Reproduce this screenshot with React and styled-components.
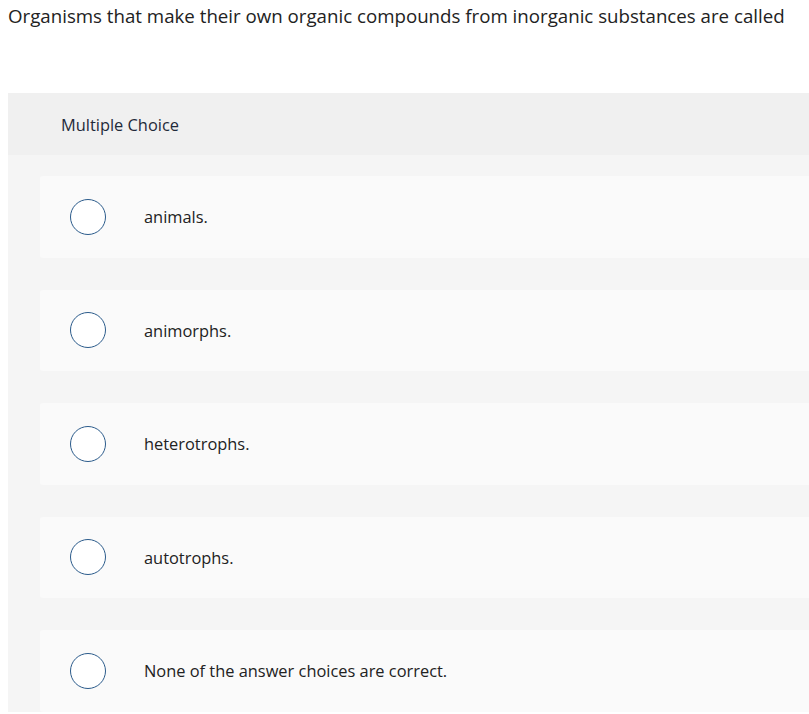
import React from 'react'
import styled, { createGlobalStyle } from 'styled-components'

const GlobalStyle = createGlobalStyle`
body {
  margin: 0;
  background: #ffffff;
  font-family: "Open Sans", Lato, sans-serif;
  overflow: hidden;
}
`

const Page = styled.div`
padding: 0 0 0 8px;
`

const Question = styled.p`
margin: 0;
padding-top: 4px;
font-size: 18.7px;
line-height: 24px;
color: #222222;
`

const Panel = styled.div`
margin-top: 65px;
margin-right: -40px;
background-color: #f5f5f5;
`

const PanelHeader = styled.div`
height: 62px;
display: flex;
align-items: center;
padding-left: 53px;
background-color: #f0f0f0;
font-size: 16.4px;
color: #1f2a3a;
`

const ChoiceList = styled.div`
display: flex;
flex-direction: column;
gap: 32px;
padding: 21px 0 0 32px;
`

const Choice = styled.label`
height: 81.5px;
display: flex;
align-items: center;
background-color: #fafafa;
border-radius: 3px;
cursor: pointer;
`

const Radio = styled.span`
box-sizing: border-box;
width: 36px;
height: 36px;
margin-left: 30px;
border: 1.5px solid #2b5b8b;
border-radius: 50%;
background: #ffffff;
flex-shrink: 0;
`

const ChoiceText = styled.span`
margin-left: 38px;
font-size: 16.4px;
color: #222222;
`

const choices = [
  'animals.',
  'animorphs.',
  'heterotrophs.',
  'autotrophs.',
  'None of the answer choices are correct.',
]

export default function App() {
  return (
    <Page>
      <GlobalStyle />
      <Question>
        Organisms that make their own organic compounds from inorganic substances are called
      </Question>
      <Panel>
        <PanelHeader>Multiple Choice</PanelHeader>
        <ChoiceList>
          {choices.map((c) => (
            <Choice key={c}>
              <Radio />
              <ChoiceText>{c}</ChoiceText>
            </Choice>
          ))}
        </ChoiceList>
      </Panel>
    </Page>
  )
}
